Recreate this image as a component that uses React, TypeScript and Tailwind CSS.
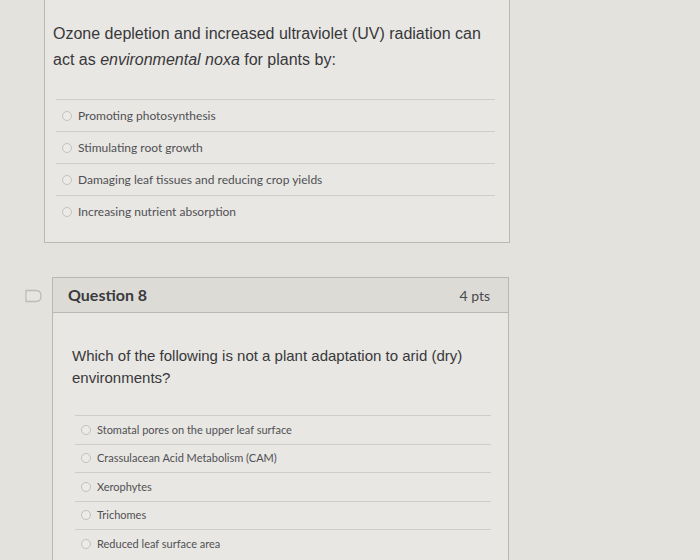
const q1Options = [
  "Promoting photosynthesis",
  "Stimulating root growth",
  "Damaging leaf tissues and reducing crop yields",
  "Increasing nutrient absorption",
];

const q2Options = [
  "Stomatal pores on the upper leaf surface",
  "Crassulacean Acid Metabolism (CAM)",
  "Xerophytes",
  "Trichomes",
  "Reduced leaf surface area",
];

function Radio() {
  return <span className="w-[10px] h-[10px] shrink-0 rounded-full border border-[#c2c1bd] bg-[#ecebe8]" />;
}

function OptionRow({ label, size, height }: { label: string; size: string; height: string }) {
  return (
    <div className={`flex items-center gap-[6px] pl-[6px] border-t border-[#cfcdc8] ${height}`}>
      <Radio />
      <span className={`text-[#505054] ${size}`} style={{ fontFamily: "Lato, 'Open Sans', sans-serif" }}>
        {label}
      </span>
    </div>
  );
}

function FlagIcon() {
  return (
    <svg width="18" height="14" viewBox="0 0 18 14" fill="none">
      <path d="M1 1.5 H11 Q16 1.5 16 7 Q16 12.5 11 12.5 H1 Z" stroke="#bdbcb8" strokeWidth="1.3" fill="#e6e5e1" />
    </svg>
  );
}

export default function App() {
  return (
    <div
      className="w-[700px] h-[560px] overflow-hidden bg-[#e4e2dd]"
      style={{ fontFamily: "'Liberation Sans', Arial, sans-serif" }}
    >
      {/* question 7, top cut off */}
      <div className="ml-[44px] w-[466px] h-[243px] border-x border-b border-[#bab8b3] bg-[#e8e7e3]">
        <p className="pl-[8px] pt-[21px] w-[450px] text-[16px] leading-[26px] text-[#38383b]">
          Ozone depletion and increased ultraviolet (UV) radiation can act as <i>environmental noxa</i> for plants by:
        </p>
        <div className="ml-[11px] w-[439px] mt-[26px]">
          {q1Options.map((o) => (
            <OptionRow key={o} label={o} size="text-[12px]" height="h-[32px]" />
          ))}
        </div>
      </div>

      {/* question 8 */}
      <div className="relative mt-[34px] ml-[52px] w-[457px]">
        <div className="absolute -left-[27px] top-[12px]">
          <FlagIcon />
        </div>
        <div className="h-[36px] flex items-center justify-between pl-[15px] pr-[18px] border border-[#bab8b3] bg-[#dcdbd6]">
          <span className="text-[16px] font-bold text-[#3a3a3e]" style={{ fontFamily: "Lato, sans-serif" }}>
            Question 8
          </span>
          <span className="text-[14px] text-[#4a4a4e]" style={{ fontFamily: "Lato, sans-serif" }}>
            4 pts
          </span>
        </div>
        <div className="h-[260px] border-x border-[#bab8b3] bg-[#e8e7e3]">
          <p className="pl-[19px] pt-[32px] w-[430px] text-[15px] leading-[22px] text-[#38383b]">
            Which of the following is not a plant adaptation to arid (dry) environments?
          </p>
          <div className="ml-[22px] w-[416px] mt-[26px]">
            {q2Options.map((o) => (
              <OptionRow key={o} label={o} size="text-[11px]" height="h-[28.5px]" />
            ))}
          </div>
        </div>
      </div>
    </div>
  );
}
